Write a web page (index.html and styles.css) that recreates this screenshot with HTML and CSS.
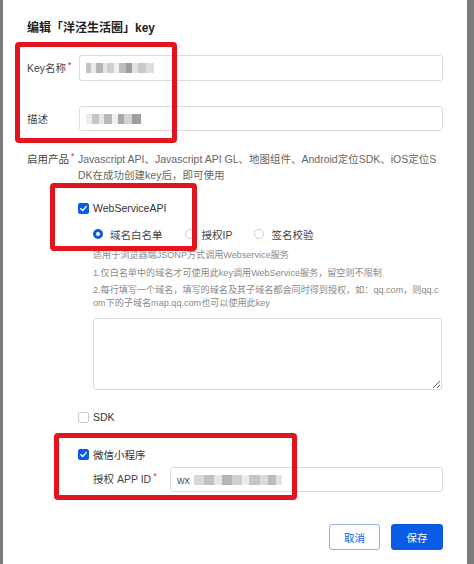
FILE: index.html
```html
<!DOCTYPE html>
<html lang="zh-CN">
<head>
    <meta charset="UTF-8">
    <meta name="viewport" content="width=device-width, initial-scale=1.0">
    <title>编辑key</title>
    <link rel="stylesheet" href="styles.css">
</head>
<body>
    <div class="page">
        <div class="dialog">
            <h2 class="dialog-title">编辑「洋泾生活圈」key</h2>

            <div class="form">
                <!-- 基本信息 -->
                <div class="row">
                    <label class="label label-input">Key名称<i class="req">*</i></label>
                    <div class="input"><span class="mosaic mosaic-name"></span></div>
                </div>
                <div class="row row-desc">
                    <label class="label label-input">描述</label>
                    <div class="input input-sm"><span class="mosaic mosaic-desc"></span></div>
                </div>

                <!-- 启用产品 -->
                <div class="row row-products">
                    <label class="label">启用产品<i class="req">*</i></label>
                    <div class="field">
                        <div class="desc">Javascript API、Javascript API GL、地图组件、Android定位SDK、iOS定位SDK在成功创建key后，即可使用</div>

                        <div class="check-row check-ws">
                            <span class="box on"><svg viewBox="0 0 10 10"><path d="M2 5.2 4.1 7.2 8 2.9" /></svg></span>
                            <span>WebServiceAPI</span>
                        </div>

                        <div class="radio-group">
                            <span class="radio"><span class="dot on"></span>域名白名单</span>
                            <span class="radio"><span class="dot"></span>授权IP</span>
                            <span class="radio"><span class="dot"></span>签名校验</span>
                        </div>

                        <div class="hints">
                            <p>适用于浏览器端JSONP方式调用Webservice服务</p>
                            <p>1.仅白名单中的域名才可使用此key调用WebService服务，留空则不限制</p>
                            <p>2.每行填写一个域名，填写的域名及其子域名都会同时得到授权，如：qq.com，则qq.com下的子域名map.qq.com也可以使用此key</p>
                        </div>

                        <textarea class="domains"></textarea>

                        <div class="check-row check-sdk">
                            <span class="box"></span>
                            <span>SDK</span>
                        </div>

                        <div class="check-row check-mp">
                            <span class="box on"><svg viewBox="0 0 10 10"><path d="M2 5.2 4.1 7.2 8 2.9" /></svg></span>
                            <span>微信小程序</span>
                        </div>

                        <div class="row row-appid">
                            <label class="label label-appid">授权 APP ID<i class="req">*</i></label>
                            <div class="input input-sm"><span class="appid-text">wx</span><span class="mosaic mosaic-appid"></span></div>
                        </div>
                    </div>
                </div>
            </div>

            <div class="footer">
                <button class="btn">取消</button>
                <button class="btn btn-primary">保存</button>
            </div>

            <!-- 标注框 -->
            <div class="mark mark-base"></div>
            <div class="mark mark-ws"></div>
            <div class="mark mark-mp"></div>
        </div>
    </div>
</body>
</html>
```

FILE: styles.css
```css
* {
    box-sizing: border-box;
}
body {
    margin: 0;
    background: #7c7c7c;
    font-family: "Liberation Sans", "Noto Sans CJK SC", sans-serif;
    font-size: 10.5px;
    color: #333;
    overflow: hidden;
}
.page {
    display: flex;
    padding-left: 3px;
}
.dialog {
    position: relative;
    width: 464px;
    height: 564px;
    background: #fff;
    padding: 18px 24px 0 24px;
}
.dialog-title {
    margin: 0;
    font-size: 12px;
    font-weight: bold;
    line-height: 20px;
    color: #222;
}
.form {
    margin-top: 17px;
}
.row {
    display: flex;
}
.label {
    width: 51px;
    flex: none;
    height: 16px;
    line-height: 16px;
    color: #444;
    white-space: nowrap;
}
.label-input {
    height: 26px;
    line-height: 26px;
}
.req {
    position: relative;
    top: -4px;
    font-style: normal;
    color: #e5252a;
    font-size: 9px;
    line-height: 0;
    margin-left: 2px;
}
.field {
    flex: 1;
    min-width: 0;
}
.input {
    flex: 1;
    height: 26px;
    border: 1px solid #dcdcdc;
    border-radius: 3px;
    display: flex;
    align-items: center;
    padding-left: 6px;
    margin-left: 1px;
}
.input-sm {
    height: 25px;
}
.row-desc {
    margin-top: 25px;
}
.row-products {
    margin-top: 19px;
}
.desc {
    line-height: 16px;
    color: #666;
    word-break: break-all;
}

/* 复选框 */
.check-row {
    display: flex;
    align-items: center;
    height: 16px;
    font-size: 10.5px;
    color: #333;
}
.check-ws {
    margin-top: 17px;
}
.check-sdk {
    margin-top: 19px;
}
.check-mp {
    margin-top: 21px;
}
.box {
    width: 11px;
    height: 11px;
    border: 1px solid #c9c9c9;
    border-radius: 2px;
    margin-right: 4px;
    display: flex;
    align-items: center;
    justify-content: center;
}
.box.on {
    background: #0a5ce6;
    border-color: #0a5ce6;
}
.box svg {
    width: 9px;
    height: 9px;
    fill: none;
    stroke: #fff;
    stroke-width: 1.6;
    stroke-linecap: round;
    stroke-linejoin: round;
}

/* 单选 */
.radio-group {
    margin-top: 10px;
    padding-left: 15px;
    display: flex;
    gap: 22px;
    height: 16px;
    align-items: center;
}
.radio {
    display: flex;
    align-items: center;
    gap: 7px;
    color: #444;
}
.dot {
    width: 10px;
    height: 10px;
    border-radius: 50%;
    border: 1px solid #d0d0d0;
}
.dot.on {
    border: 3px solid #0a5ce6;
}

.hints {
    margin-top: 7px;
    padding-left: 15px;
    width: 364px;
    font-size: 9.1px;
    line-height: 12.5px;
    color: #8a8a8a;
    word-break: break-all;
}
.hints p {
    margin: 5px 0 0;
}
.hints p:first-child {
    margin-top: 0;
}
.domains {
    display: block;
    margin: 9px 0 0 15px;
    width: 349px;
    height: 72px;
    border: 1px solid #dcdcdc;
    border-radius: 3px;
    outline: none;
}
.row-appid {
    margin-top: 5px;
    padding-left: 15px;
}
.label-appid {
    width: 76px;
    height: 25px;
    line-height: 25px;
    font-size: 10.5px;
}
.appid-text {
    color: #555;
}

/* 打码的输入值 */
.mosaic {
    display: inline-block;
    height: 10px;
}
.mosaic-name {
    width: 68px;
    background: linear-gradient(90deg,
        #c4c4c4 0 5px, #eaeaea 5px 10px, #b5b5b5 10px 17px, #e4e4e4 17px 21px,
        #cfcfcf 21px 28px, #f0f0f0 28px 33px, #bdbdbd 33px 40px, #9e9e9e 40px 46px,
        #e2e2e2 46px 52px, #c9c9c9 52px 60px, #dedede 60px 68px);
}
.mosaic-desc {
    width: 55px;
    background: linear-gradient(90deg,
        #ececec 0 6px, #c6c6c6 6px 13px, #e6e6e6 13px 18px, #b9b9b9 18px 26px,
        #f0f0f0 26px 32px, #a8a8a8 32px 38px, #d3d3d3 38px 46px, #9f9f9f 46px 55px);
}
.mosaic-appid {
    width: 88px;
    margin-left: 4px;
    background: linear-gradient(90deg,
        #d9d9d9 0 10px, #c2c2c2 10px 20px, #e6e6e6 20px 28px, #b4b4b4 28px 38px,
        #cfcfcf 38px 48px, #ededed 48px 55px, #c6c6c6 55px 66px, #dadada 66px 74px,
        #bcbcbc 74px 82px, #e1e1e1 82px 88px);
}

.footer {
    margin-top: 32px;
    display: flex;
    justify-content: flex-end;
    gap: 11px;
}
.btn {
    width: 51px;
    height: 26px;
    border: 1px solid #8fb2ef;
    border-radius: 3px;
    background: #fff;
    color: #0a5ce6;
    font-family: inherit;
    font-size: 10.5px;
    padding: 0;
}
.btn-primary {
    width: 52px;
    background: #0a5ce6;
    border-color: #0a5ce6;
    color: #fff;
}

/* 红色标注框 */
.mark {
    position: absolute;
    border: 5px solid #e3141e;
    border-radius: 4px;
}
.mark-base {
    left: 12px;
    top: 42px;
    width: 162px;
    height: 101px;
}
.mark-ws {
    left: 47px;
    top: 183px;
    width: 147px;
    height: 68px;
}
.mark-mp {
    left: 51px;
    top: 433px;
    width: 243px;
    height: 67px;
}
```
